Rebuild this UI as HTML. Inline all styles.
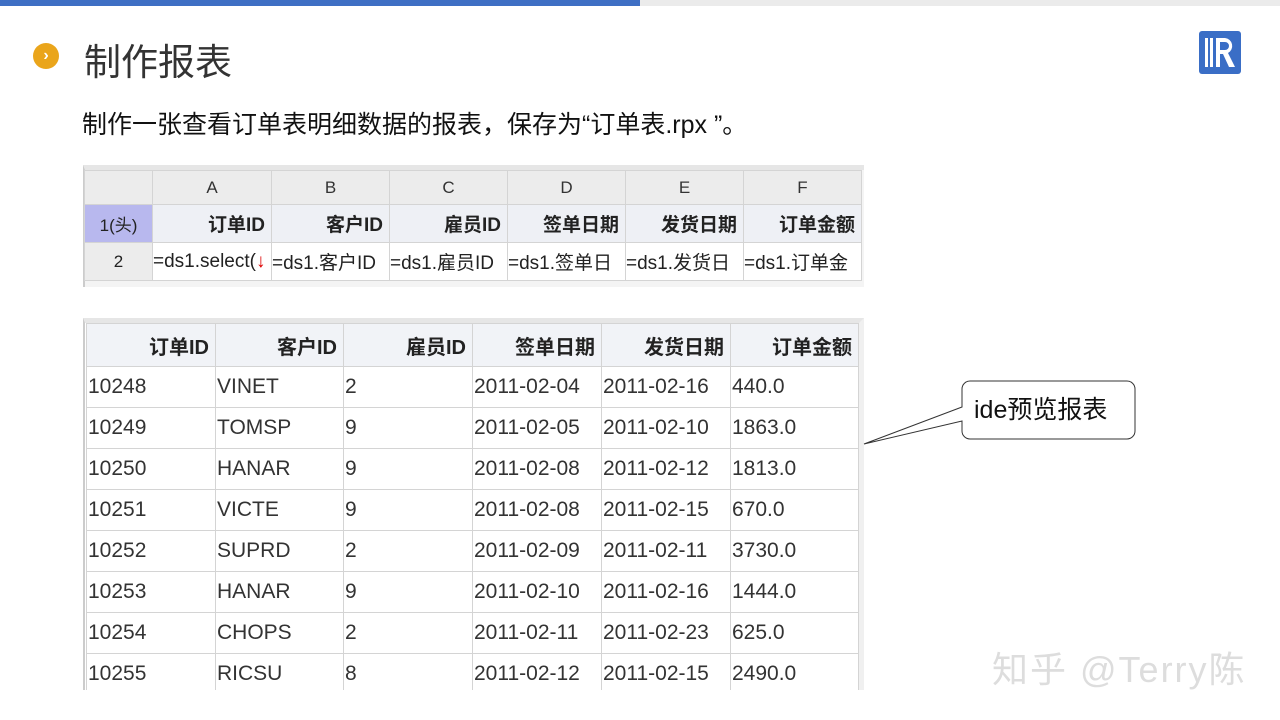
<!DOCTYPE html><html><head><meta charset="utf-8"><style>
*{margin:0;padding:0;box-sizing:border-box}
body{width:1280px;height:720px;background:#fff;position:relative;overflow:hidden;font-family:"Liberation Sans","Noto Sans CJK SC",sans-serif}
.a{position:absolute}
table{border-collapse:collapse;position:absolute;table-layout:fixed}
td{border:1px solid #d4d4d4;white-space:nowrap;overflow:hidden;color:#222}
.d td{font-size:19px;height:38px}
.d .h td{background:#ececec;text-align:center;font-size:17px;height:34px;color:#333}
.d .r1 td{background:#eef0f5;font-weight:bold;text-align:right;padding-right:6px;font-size:19px}
.d td.rh{background:#ececec;text-align:center;font-weight:normal;font-size:17px;padding:0}
.p td{font-size:21px;height:41px;padding-left:1px;color:#333}
.p .h td{background:#f1f3f7;font-weight:bold;text-align:right;padding-right:6px;height:43px;color:#222;font-size:20px}
</style></head><body>
<div class="a" style="left:0;top:0;width:640px;height:6px;background:#3e6fc4"></div>
<div class="a" style="left:640px;top:0;width:640px;height:6px;background:#ebebeb"></div>
<div class="a" style="left:33px;top:43px;width:26px;height:26px;border-radius:50%;background:#eaa51b;color:#fff;font-weight:bold;font-size:16px;line-height:26px;text-align:center">›</div>
<div class="a" style="left:84px;top:32px;font-size:37px;color:#333">制作报表</div>
<div class="a" style="left:82px;top:105px;font-size:25px;color:#111">制作一张查看订单表明细数据的报表，保存为“订单表.rpx ”。</div>
<svg class="a" style="left:1199px;top:31px" width="42" height="43"><rect width="42" height="43" rx="3" fill="#3a6ec6"/><rect x="6" y="7" width="3" height="29" fill="#fff"/><rect x="11" y="7" width="3" height="29" fill="#fff"/><path d="M17 7h9a8 8 0 0 1 3 15l7 14h-6l-6-13h-3v13h-4z M21 11v8h5a4 4 0 0 0 0-8z" fill="#fff" fill-rule="evenodd"/></svg>
<div class="a" style="left:83px;top:165px;width:781px;height:122px;background:#f4f4f4;border-left:2px solid #ccc;border-top:5px solid #e6e6e6"></div>
<table class="d" style="left:84px;top:170px;width:777px">
<colgroup><col style="width:68px"><col style="width:119px"><col style="width:118px"><col style="width:118px"><col style="width:118px"><col style="width:118px"><col style="width:118px"></colgroup>
<tr class="h"><td></td><td>A</td><td>B</td><td>C</td><td>D</td><td>E</td><td>F</td></tr>
<tr class="r1"><td class="rh" style="background:#b8b8ee">1(头)</td><td>订单ID</td><td>客户ID</td><td>雇员ID</td><td>签单日期</td><td>发货日期</td><td>订单金额</td></tr>
<tr style="background:#fff"><td class="rh">2</td><td>=ds1.select(<span style="color:#d00">↓</span></td><td>=ds1.客户ID</td><td>=ds1.雇员ID</td><td>=ds1.签单日</td><td>=ds1.发货日</td><td>=ds1.订单金</td></tr>
</table>
<div class="a" style="left:83px;top:318px;width:781px;height:372px;background:#fff;border-left:2px solid #ccc;border-top:5px solid #e6e6e6;border-right:5px solid #f0f0f0"></div>
<table class="p" style="left:86px;top:323px;width:772px">
<colgroup><col style="width:129px"><col style="width:128px"><col style="width:129px"><col style="width:129px"><col style="width:129px"><col style="width:128px"></colgroup>
<tr class="h"><td>订单ID</td><td>客户ID</td><td>雇员ID</td><td>签单日期</td><td>发货日期</td><td>订单金额</td></tr>
<tr><td>10248</td><td>VINET</td><td>2</td><td>2011-02-04</td><td>2011-02-16</td><td>440.0</td></tr>
<tr><td>10249</td><td>TOMSP</td><td>9</td><td>2011-02-05</td><td>2011-02-10</td><td>1863.0</td></tr>
<tr><td>10250</td><td>HANAR</td><td>9</td><td>2011-02-08</td><td>2011-02-12</td><td>1813.0</td></tr>
<tr><td>10251</td><td>VICTE</td><td>9</td><td>2011-02-08</td><td>2011-02-15</td><td>670.0</td></tr>
<tr><td>10252</td><td>SUPRD</td><td>2</td><td>2011-02-09</td><td>2011-02-11</td><td>3730.0</td></tr>
<tr><td>10253</td><td>HANAR</td><td>9</td><td>2011-02-10</td><td>2011-02-16</td><td>1444.0</td></tr>
<tr><td>10254</td><td>CHOPS</td><td>2</td><td>2011-02-11</td><td>2011-02-23</td><td>625.0</td></tr>
<tr><td>10255</td><td>RICSU</td><td>8</td><td>2011-02-12</td><td>2011-02-15</td><td>2490.0</td></tr>
</table>
<div class="a" style="left:0;top:690px;width:900px;height:30px;background:#fff"></div>
<svg class="a" style="left:860px;top:378px" width="280" height="70"><path d="M110 3h157a8 8 0 0 1 8 8v42a8 8 0 0 1-8 8h-157a8 8 0 0 1-8-8v-10l-98 23 98-37v-18a8 8 0 0 1 8-8z" fill="#fff" stroke="#333" stroke-width="1"/></svg>
<div class="a" style="left:974px;top:390px;font-size:25px;color:#111">ide预览报表</div>
<div class="a" style="left:992px;top:641px;font-size:36px;color:#ddd;letter-spacing:2px">知乎 @Terry陈</div>
</body></html>
